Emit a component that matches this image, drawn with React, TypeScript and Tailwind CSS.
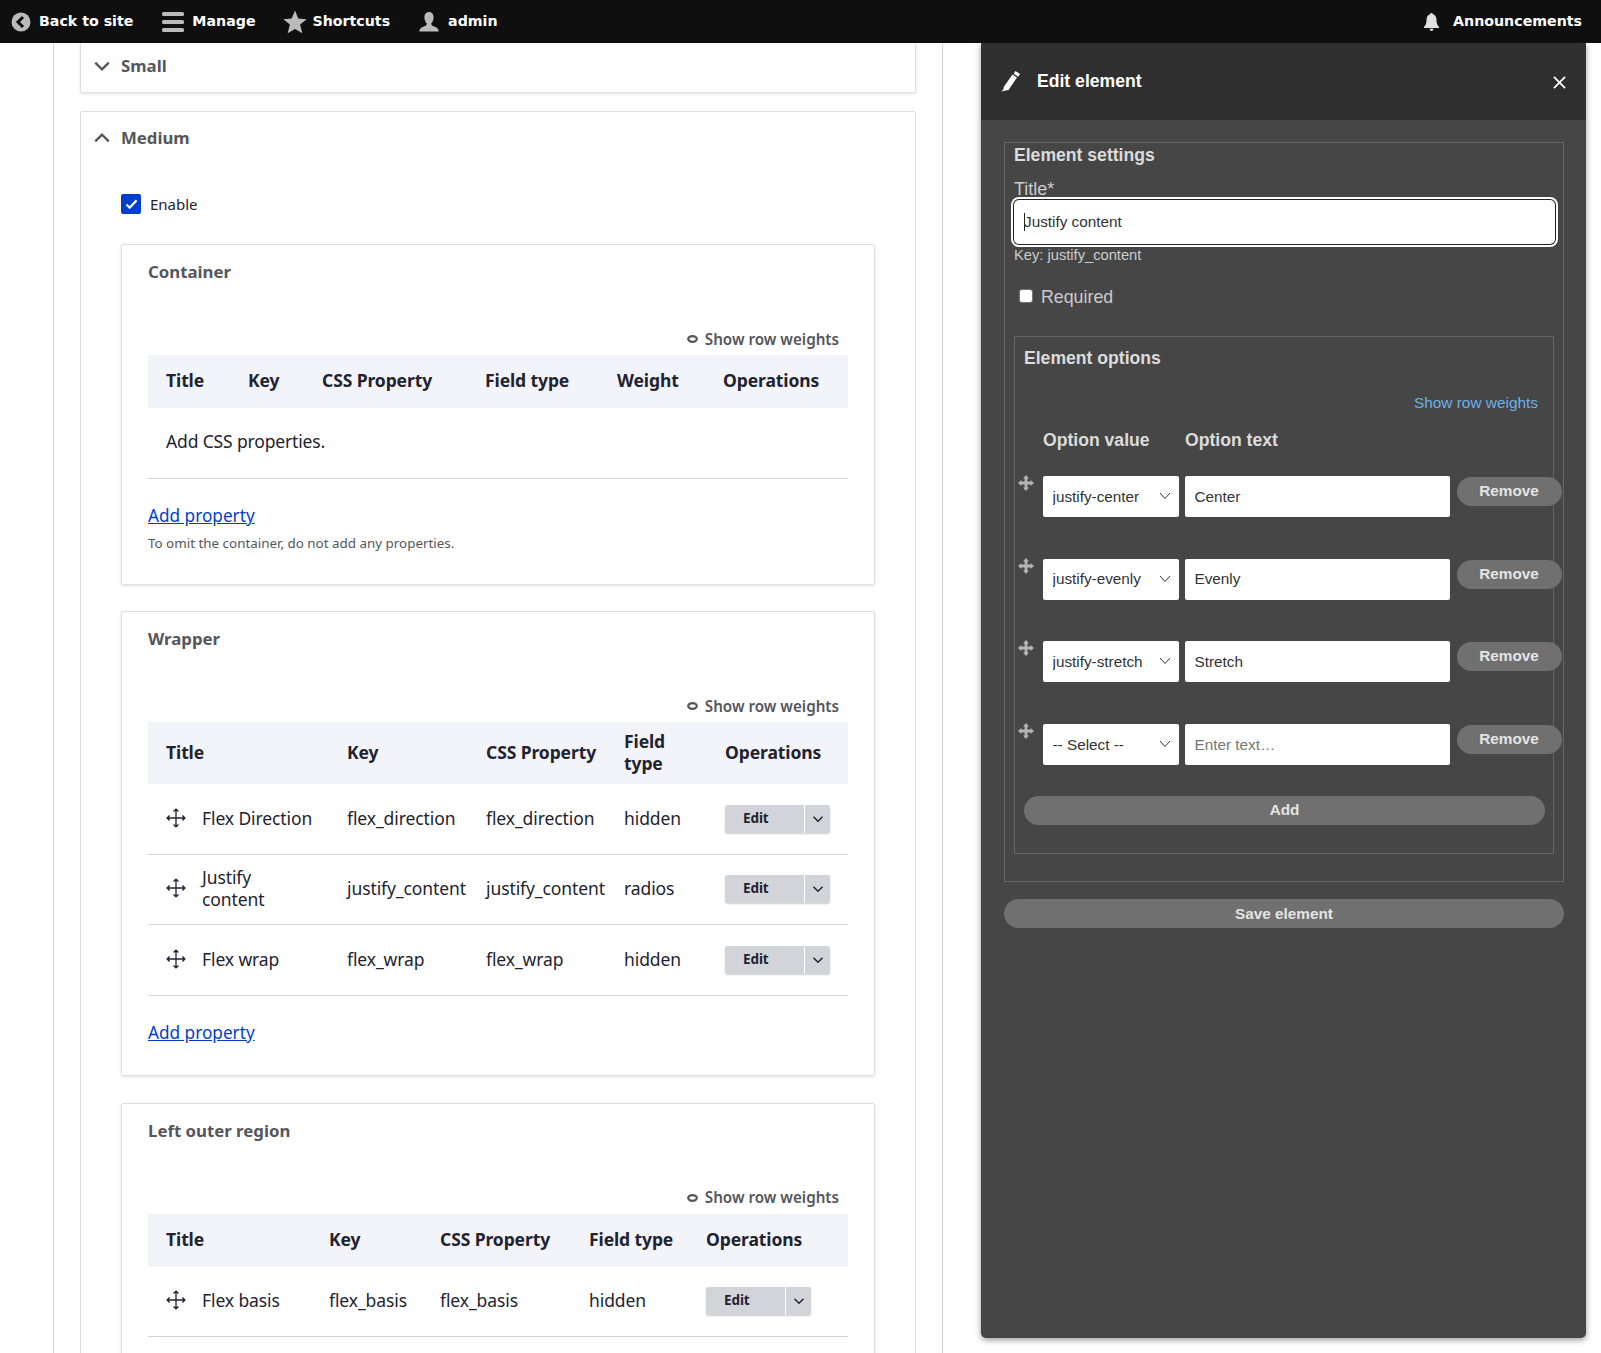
import type { ReactNode } from "react";

const ChevronDown = ({ className }: { className?: string }) => (
  <svg viewBox="0 0 16 16" className={className} fill="none" stroke="currentColor" strokeWidth="2">
    <path d="M2 5l6 6 6-6" />
  </svg>
);

const Move = () => (
  <svg viewBox="1 1 18 18" className="w-5 h-5 shrink-0 text-[#222330]" fill="none" stroke="currentColor" strokeWidth="1.2">
    <path d="M10 2v16M2 10h16M7.8 4.2L10 2l2.2 2.2M7.8 15.8L10 18l2.2-2.2M4.2 7.8L2 10l2.2 2.2M15.8 7.8L18 10l-2.2 2.2" />
  </svg>
);

const PanelMove = () => (
  <svg viewBox="0 0 16 16" className="w-4 h-4 text-[#b5b5b5]" fill="currentColor">
    <path d="M8 0l3 3.400H9.400v3.200h3.200V5l3.400 3-3.400 3V9.400H9.400v3.200H11L8 16l-3-3.400h1.600V9.400H3.400V11L0 8l3.400-3v1.600h3.200V3.400H5z" />
  </svg>
);

const Eye = () => (
  <svg viewBox="0 0 14 10" className="w-[13px] h-[10px] text-[#55565b]" fill="none" stroke="currentColor" strokeWidth="2.4">
    <ellipse cx="7" cy="5" rx="4.6" ry="3" />
  </svg>
);

function ShowWeights() {
  return (
    <div className="mt-[32px] h-5 flex items-center justify-end gap-[6px] pr-[9px] text-[15.200px] font-semibold text-[#55565b]">
      <Eye />
      <span>Show row weights</span>
    </div>
  );
}

function EditButton() {
  return (
    <div className="flex mt-[2px] w-[105px] h-[28px] rounded-[3px] bg-[#d3d4d9] shadow-[0_1px_2px_rgba(0,0,0,0.2)] text-[#222330]">
      <div className="w-[79px] pl-[18px] pb-[2px] flex items-center text-[13.5px] font-bold">Edit</div>
      <div className="flex-1 flex items-center justify-center border-l border-white">
        <ChevronDown className="w-3 h-3" />
      </div>
    </div>
  );
}

function InnerCard({ title, children, className }: { title: string; children: ReactNode; className?: string }) {
  return (
    <section className={`border border-[#dedfe4] rounded-[2px] shadow-[0_1px_3px_rgba(0,0,0,0.12)] px-[26px] ${className ?? ""}`}>
      <h3 className="h-[52px] pt-[2px] flex items-center text-[16.800px] font-bold text-[#55565b]">{title}</h3>
      {children}
    </section>
  );
}

type PropRow = { title: ReactNode; key: string; css: string; type: string };

function PropTable({ cols, head, rows }: { cols: string; head: ReactNode[]; rows: PropRow[] }) {
  return (
    <div className="mt-[6px] text-[#222330]">
      <div className={`grid ${cols} items-center min-h-[53px] pt-[8px] pb-[10px] pl-[18px] bg-[#f3f4f9] text-[17.500px] tracking-[-0.1px] font-bold leading-[22px]`}>
        {head.map((h, i) => (
          <div key={i}>{h}</div>
        ))}
      </div>
      {rows.map((r) => (
        <div key={r.key} className={`grid ${cols} items-center h-[70.5px] pb-[2px] pl-[18px] border-b border-[#d3d4d9] text-[17.500px] tracking-[-0.1px] leading-[22px]`}>
          <div className="flex items-center gap-4">
            <Move />
            <div>{r.title}</div>
          </div>
          <div>{r.key}</div>
          <div>{r.css}</div>
          <div>{r.type}</div>
          <EditButton />
        </div>
      ))}
    </div>
  );
}

function OptionRow({ value, text, placeholder }: { value: string; text?: string; placeholder?: string }) {
  return (
    <div className="flex h-[82.7px] items-start">
      <div className="w-[24.5px] shrink-0 -mt-[1px]">
        <PanelMove />
      </div>
      <div className="relative w-[136px] h-[41px] shrink-0">
        <select
          defaultValue={value}
          className="appearance-none w-full h-full bg-white rounded-[2px] pl-[10px] pt-[1px] text-[15.300px] text-[#333] outline-none"
        >
          <option>{value}</option>
        </select>
        <svg viewBox="0 0 12 8" className="absolute right-[8px] top-[16px] w-[12px] h-[8px] text-[#333]" fill="none" stroke="currentColor" strokeWidth="1">
          <path d="M1 1l5 5.5L11 1" />
        </svg>
      </div>
      <input
        readOnly
        defaultValue={text}
        placeholder={placeholder}
        className="ml-[6px] w-[265px] h-[41px] shrink-0 bg-white rounded-[2px] px-[10px] text-[15.300px] text-[#333] placeholder:text-[#777] outline-none"
      />
      <button className="ml-[7px] mt-[1px] w-[105px] h-[29px] shrink-0 rounded-full bg-[#707070] text-[15.300px] font-bold text-[#e4e4e4]">Remove</button>
    </div>
  );
}

export default function App() {
  return (
    <div className="relative h-[1353px] overflow-hidden bg-white font-['Noto_Sans',sans-serif]">
      {/* Toolbar */}
      <header className="relative z-10 h-[43px] bg-[#0f0f0f] flex items-center text-white text-[14.200px] font-bold font-['DejaVu_Sans',sans-serif]">
        <svg viewBox="0 0 20 20" className="ml-[11px] w-5 h-5 text-[#bbb]">
          <circle cx="10" cy="10" r="9.5" fill="currentColor" />
          <path d="M12 5l-5 5 5 5" fill="none" stroke="#0f0f0f" strokeWidth="3" />
        </svg>
        <span className="ml-[8px]">Back to site</span>
        <svg viewBox="0 0 24 22" className="ml-[28px] w-6 h-[22px] text-[#bbb]" fill="currentColor">
          <rect x="1" y="1" width="22" height="4" rx="1.5" />
          <rect x="1" y="9" width="22" height="4" rx="1.5" />
          <rect x="1" y="17" width="22" height="4" rx="1.5" />
        </svg>
        <span className="ml-[7px]">Manage</span>
        <svg viewBox="0 0 22 22" className="ml-[27px] w-6 h-6 text-[#bbb]" fill="currentColor">
          <path d="M11 0.5l3 7.4 7.7.5-6 5 2 7.8L11 17.4l-6.7 3.800 2-7.800-6-5 7.700-.5z" />
        </svg>
        <span className="ml-[6px]">Shortcuts</span>
        <svg viewBox="0 0 22 22" className="ml-[28px] w-[22px] h-[22px] text-[#bbb]" fill="currentColor">
          <path d="M11 1c3 0 4.600 2.400 4.600 5.400 0 2.600-1.200 4.800-2.400 6 0 1.600.8 2.200 3 3 2.600 1 4.400 2 4.600 5.100H1.200c.2-3.100 2-4.100 4.600-5.100 2.200-.8 3-1.400 3-3-1.200-1.200-2.400-3.400-2.400-6C6.400 3.400 8 1 11 1z" />
        </svg>
        <span className="ml-[8px]">admin</span>
        <svg viewBox="0 0 18 22" className="ml-auto w-[17px] h-[20px] text-[#e0e0e0]" fill="currentColor">
          <path d="M9 1c1 0 1.500.7 1.500 1.600C13.500 3.400 14.500 6 14.500 9c0 3.500 1 5.500 2.800 7.400v1.100H.7v-1.100C2.500 14.500 3.500 12.500 3.500 9c0-3 1-5.600 4-6.400C7.500 1.700 8 1 9 1zM6.800 18.500h4.400c0 1.300-1 2.300-2.200 2.300s-2.200-1-2.200-2.300z" />
        </svg>
        <span className="ml-[13px] mr-[19px]">Announcements</span>
      </header>

      {/* Main form */}
      <main className="ml-[53px] w-[890px] border-x border-[#d3d4d9] pl-[26px] pr-[26px] pb-[60px]">
        <div className="h-[50px] pb-[4px] flex items-center gap-[10px] pl-[12px] border-x border-b border-[#dedfe4] rounded-b-[2px] shadow-[0_1px_3px_rgba(0,0,0,0.12)] text-[#55565b] text-[16.800px] font-bold">
          <ChevronDown className="w-[18px] h-[18px]" />
          Small
        </div>

        <div className="mt-[18px] border border-[#dedfe4] rounded-[2px] px-10 pb-[40px]">
          <div className="h-[52px] -ml-[28px] flex items-center gap-[10px] text-[#55565b] text-[16.800px] font-bold">
            <ChevronDown className="w-[18px] h-[18px] rotate-180" />
            Medium
          </div>

          <label className="mt-[30px] h-5 flex items-center gap-[9px] text-[15px] text-[#222330]">
            <span className="w-5 h-5 rounded-[2px] bg-[#003ecc] flex items-center justify-center">
              <svg viewBox="0 0 14 12" className="w-[13px] h-[11px]" fill="none" stroke="white" strokeWidth="2.4">
                <path d="M1.500 6l3.500 3.500 7.500-8" />
              </svg>
            </span>
            Enable
          </label>

          <InnerCard title="Container" className="mt-[30px] pb-[31px]">
            <ShowWeights />
            <div className="mt-[6px] text-[#222330]">
              <div className="grid grid-cols-[82px_74px_163px_132px_106px_1fr] items-center h-[53px] pb-[2px] pl-[18px] bg-[#f3f4f9] text-[17.500px] tracking-[-0.1px] font-bold">
                <div>Title</div>
                <div>Key</div>
                <div>CSS Property</div>
                <div>Field type</div>
                <div>Weight</div>
                <div>Operations</div>
              </div>
              <div className="h-[71px] pb-[4px] flex items-center pl-[18px] border-b border-[#d3d4d9] text-[17.500px] tracking-[-0.15px]">Add CSS properties.</div>
            </div>
            <a className="block mt-[26px] h-[22px] text-[17.200px] leading-[22px] text-[#003ecc] underline">Add property</a>
            <p className="mt-[6px] h-5 text-[13.400px] leading-5 text-[#55565b]">To omit the container, do not add any properties.</p>
          </InnerCard>

          <InnerCard title="Wrapper" className="mt-[26px] pb-[31px]">
            <ShowWeights />
            <PropTable
              cols="grid-cols-[181px_139px_138px_101px_1fr]"
              head={["Title", "Key", "CSS Property", <>Field<br />type</>, "Operations"]}
              rows={[
                { title: "Flex Direction", key: "flex_direction", css: "flex_direction", type: "hidden" },
                { title: <>Justify<br />content</>, key: "justify_content", css: "justify_content", type: "radios" },
                { title: "Flex wrap", key: "flex_wrap", css: "flex_wrap", type: "hidden" },
              ]}
            />
            <a className="block mt-[26px] h-[22px] text-[17.200px] leading-[22px] text-[#003ecc] underline">Add property</a>
          </InnerCard>

          <InnerCard title="Left outer region" className="mt-[27px] pb-[32px]">
            <ShowWeights />
            <PropTable
              cols="grid-cols-[163px_111px_149px_117px_1fr]"
              head={["Title", "Key", "CSS Property", "Field type", "Operations"]}
              rows={[{ title: "Flex basis", key: "flex_basis", css: "flex_basis", type: "hidden" }]}
            />
          </InnerCard>
        </div>
      </main>

      {/* Off-canvas panel */}
      <aside className="absolute left-[981px] top-[43px] w-[605px] h-[1295px] z-[5] rounded-b-[5px] bg-[#464646] shadow-[0_2px_6px_rgba(0,0,0,0.4)] font-['Liberation_Sans',sans-serif] text-[#dcdcdc]">
        <div className="relative h-[77px] bg-[#2f2f2f] flex items-center rounded-t-[3px] pb-[1px]">
          <svg viewBox="0 0 20 22" className="ml-[19px] w-[21px] h-[22px]" fill="white">
            <path d="M15 1l4.500 3-1.800 2.700-4.500-3zM12 4.500l4.500 3L8 20l-5.500 1 .9-4.200z" />
            <path d="M1.500 21.500l1-1.500" stroke="white" strokeWidth="1" />
          </svg>
          <h2 className="ml-[16px] text-[17.600px] font-bold text-white">Edit element</h2>
          <svg viewBox="0 0 14 14" className="absolute right-[20px] top-[33px] w-[13px] h-[13px]" fill="none" stroke="white" strokeWidth="1.900">
            <path d="M1 1l12 12M13 1L1 13" />
          </svg>
        </div>

        <div className="mt-[22px] ml-[23px] mr-[22px] border border-[#666] h-[740px] px-[9px]">
          <div className="h-[25px] flex items-center text-[17.600px] font-bold">Element settings</div>
          <div className="mt-[10px] h-[22px] leading-[22px] text-[18px] text-[#ccc]">Title*</div>
          <div className="relative">
            <input
              readOnly
              defaultValue="Justify content"
              className="block w-[541px] h-[44px] bg-white rounded-[5px] pl-[10px] text-[15.300px] text-[#333] outline-none shadow-[0_0_0_1px_#222,0_0_0_3px_white]"
            />
            <span className="absolute left-[10px] top-[13px] w-px h-[18px] bg-[#222]" />
          </div>
          <div className="mt-[1px] h-5 leading-5 text-[14.700px] text-[#ccc]">Key: justify_content</div>
          <label className="mt-[22px] h-5 pl-[5px] flex items-center gap-[8px] text-[17.800px] text-[#ccc]">
            <span className="w-[14px] h-[14px] -mt-[3px] bg-white rounded-[3px] border border-[#777]" />
            Required
          </label>

          <div className="mt-[29px] border border-[#666] h-[518px] px-[9px]">
            <div className="mt-[10px] h-[22px] flex items-center text-[17.600px] font-bold">Element options</div>
            <div className="mt-[24px] h-5 pr-[6px] text-right text-[15.400px] leading-5 text-[#6cb0ea]">Show row weights</div>
            <div className="mt-[17px] h-5 pl-[19px] flex text-[17.600px] font-bold leading-5">
              <span className="w-[142px]">Option value</span>
              <span>Option text</span>
            </div>
            <div className="mt-[26px] -ml-[6px]">
              <OptionRow value="justify-center" text="Center" />
              <OptionRow value="justify-evenly" text="Evenly" />
              <OptionRow value="justify-stretch" text="Stretch" />
              <OptionRow value="-- Select --" placeholder="Enter text…" />
            </div>
            <button className="block -mt-[11px] w-[521px] h-[29px] rounded-full bg-[#707070] text-[15.300px] font-bold text-[#e4e4e4]">Add</button>
          </div>
        </div>

        <button className="block mt-[17px] ml-[23px] w-[560px] h-[29px] pt-[1px] rounded-full bg-[#707070] text-[15.300px] font-bold text-[#e4e4e4]">Save element</button>
      </aside>
    </div>
  );
}
